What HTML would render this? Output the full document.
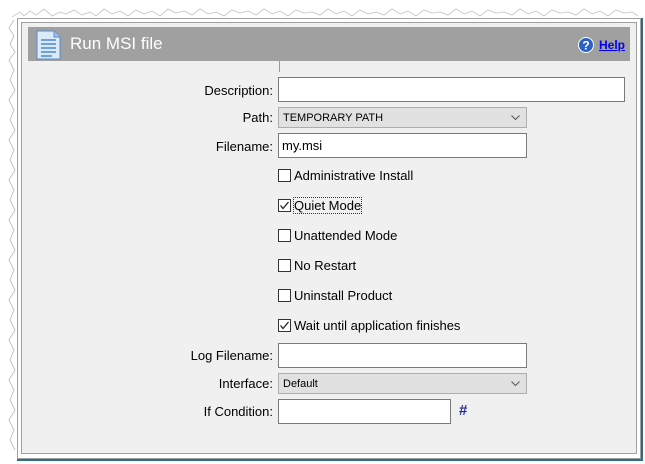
<!DOCTYPE html>
<html><head><style>
*{margin:0;padding:0;box-sizing:border-box}
body{width:645px;height:464px;background:#fff;position:relative;overflow:hidden;font-family:"Liberation Sans",sans-serif;font-size:13px;color:#000}
.abs{position:absolute}
.lbl{position:absolute;right:372px;text-align:right;white-space:nowrap}
.inp{position:absolute;background:#fff;border:1px solid #7a7a7a}
.sel{position:absolute;background:#e1e1e1;border:1px solid #adadad;font-size:11px;padding:4px 0 0 4px}
.sel svg{position:absolute;right:6px;top:7px}
.cb{position:absolute;left:278px;width:13px;height:13px;border:1px solid #333;background:#fff}
.ct{position:absolute;left:294px;white-space:nowrap}
</style></head><body>
<svg class="abs" style="left:0;top:0" width="645" height="464">
<path d="M12 17 L20 12 24 16 30 11 36 15 44 9 52 16 60 12 66 14 74 10 82 15 90 12 96 16 104 9 112 14 120 11 128 16 136 10 144 14 152 11 160 16 168 9 176 13 184 11 192 15 200 9 208 14 216 12 224 16 232 10 240 13 248 11 256 15 264 9 272 14 280 11 288 16 296 10 304 13 312 12 320 15 328 9 336 14 344 11 352 16 360 10 368 14 376 12 384 15 392 9 400 14 408 11 416 16 424 10 432 13 440 12 448 15 456 9 464 14 472 11 480 16 488 10 496 13 504 12 512 15 520 9 528 14 536 11 544 16 552 10 560 13 568 12 576 15 584 9 592 14 600 11 608 16 616 10 624 13 632 12 638 16" fill="none" stroke="#ccc" stroke-width="1"/>
<path d="M14 20 L9 28 14 36 10 44 15 52 9 60 14 70 10 80 15 90 9 100 14 110 10 120 15 130 9 140 14 150 10 160 15 170 9 180 14 190 10 200 15 210 9 220 14 230 10 240 15 250 9 260 14 270 10 280 15 290 9 300 14 310 10 320 15 330 9 340 14 350 10 360 15 370 9 380 14 390 10 400 15 410 9 420 14 430 10 440 15 450" fill="none" stroke="#c4c4c4" stroke-width="1"/>
</svg>
<div class="abs" style="left:17px;top:18px;width:626px;height:443px;background:#2e6e8a"></div>
<div class="abs" style="left:17px;top:18px;width:624px;height:441px;background:#fff;border:1px solid #a0a0a0"></div>
<div class="abs" style="left:21px;top:22px;width:616px;height:432px;background:#f0f0f0;border:1px solid #a0a0a0"></div>
<div class="abs" style="left:28px;top:27px;width:602px;height:34px;background:#a0a0a0"></div>
<svg class="abs" style="left:36px;top:30px" width="26" height="30">
<path d="M1 1 H18 L24 7 V29 H1 Z" fill="#dbeaf9" stroke="#5b8ccc"/>
<path d="M18 1 V7 H24" fill="#9fc2ee" stroke="#5b8ccc"/>
<g stroke="#4a86d6" stroke-width="1.5"><path d="M5 10H20M5 14H20M5 18H20M5 22H20M5 26H16"/></g>
</svg>
<div class="abs" style="left:70px;top:34px;font-size:17px;color:#fff">Run MSI file</div>
<svg class="abs" style="left:578px;top:37px" width="16" height="16"><circle cx="8" cy="8" r="7.5" fill="#2a60c8" stroke="#fff"/><text x="8" y="12.5" font-size="12" font-weight="bold" fill="#fff" text-anchor="middle" font-family="Liberation Sans">?</text></svg>
<div class="abs" style="left:599px;top:38px;font-size:12px;font-weight:bold;color:#0000ee;text-decoration:underline">Help</div>
<div class="abs" style="left:279px;top:61px;width:1px;height:11px;background:#999"></div>

<div class="lbl" style="top:83px">Description:</div>
<div class="inp" style="left:278px;top:77px;width:347px;height:25px"></div>
<div class="lbl" style="top:110px">Path:</div>
<div class="sel" style="left:278px;top:107px;width:249px;height:21px">TEMPORARY PATH<svg width="9" height="6"><path d="M0.5 0.5L4.5 4.5 8.5 0.5" fill="none" stroke="#555"/></svg></div>
<div class="lbl" style="top:139px">Filename:</div>
<div class="inp" style="left:278px;top:133px;width:249px;height:25px;padding:4px 0 0 3px">my.msi</div>

<div class="cb" style="top:169px"></div><div class="ct" style="top:168px">Administrative Install</div>
<div class="cb" style="top:199px"><svg width="11" height="11" style="position:absolute;left:0;top:0"><path d="M1.5 5.5L4 8.5 9.5 2" fill="none" stroke="#222" stroke-width="1.3"/></svg></div><div class="ct" style="top:198px;outline:1px dotted #333">Quiet Mode</div>
<div class="cb" style="top:229px"></div><div class="ct" style="top:228px">Unattended Mode</div>
<div class="cb" style="top:259px"></div><div class="ct" style="top:258px">No Restart</div>
<div class="cb" style="top:289px"></div><div class="ct" style="top:288px">Uninstall Product</div>
<div class="cb" style="top:319px"><svg width="11" height="11" style="position:absolute;left:0;top:0"><path d="M1.5 5.5L4 8.5 9.5 2" fill="none" stroke="#222" stroke-width="1.3"/></svg></div><div class="ct" style="top:318px">Wait until application finishes</div>

<div class="lbl" style="top:348px">Log Filename:</div>
<div class="inp" style="left:278px;top:343px;width:249px;height:25px"></div>
<div class="lbl" style="top:376px">Interface:</div>
<div class="sel" style="left:278px;top:373px;width:249px;height:21px">Default<svg width="9" height="6"><path d="M0.5 0.5L4.5 4.5 8.5 0.5" fill="none" stroke="#555"/></svg></div>
<div class="lbl" style="top:404px">If Condition:</div>
<div class="inp" style="left:278px;top:399px;width:173px;height:25px"></div>
<div class="abs" style="left:459px;top:402px;font-size:15px;font-weight:bold;color:#2a2a9a">#</div>
</body></html>
